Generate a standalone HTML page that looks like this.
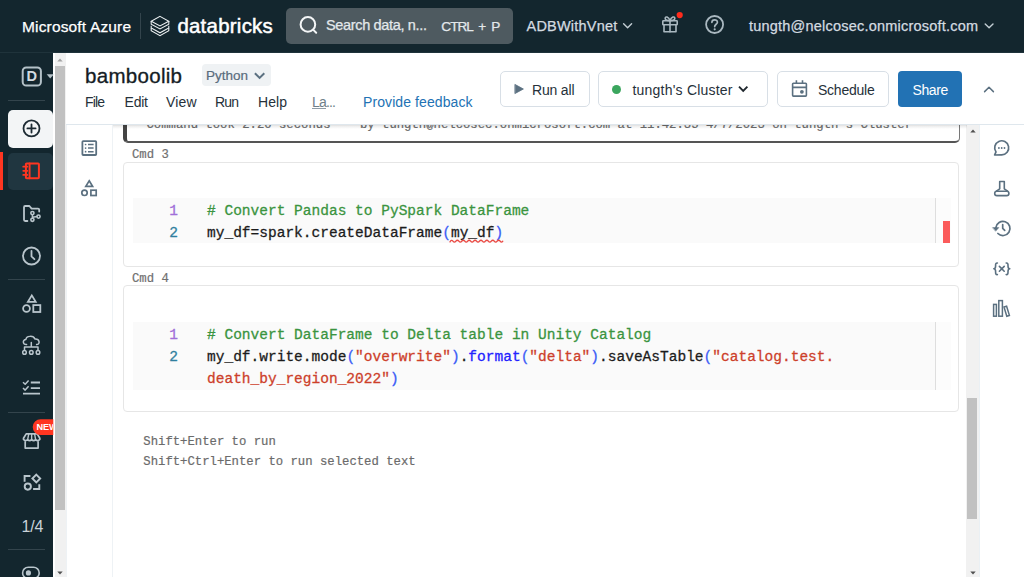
<!DOCTYPE html>
<html><head><meta charset="utf-8"><title>bamboolib - Databricks</title>
<style>
*{box-sizing:border-box;margin:0;padding:0}
html,body{width:1024px;height:577px;overflow:hidden;background:#fff;font-family:"Liberation Sans",sans-serif;}
#root{position:relative;width:1024px;height:577px;overflow:hidden;background:#fff}
.abs{position:absolute}
.t{position:absolute;white-space:pre;line-height:1;font-family:"Liberation Sans",sans-serif}
.m{position:absolute;white-space:pre;line-height:1;font-family:"Liberation Mono",monospace}
.cd{-webkit-text-stroke:0.28px currentColor}
svg{position:absolute;overflow:visible}
/* header */
#hdr{left:0;top:0;width:1024px;height:52.8px;background:#13262e;border-bottom:1px solid #1f333b}
#side{left:0;top:52px;width:53.3px;height:525px;background:#13262e}
#search{left:286px;top:8.2px;width:226.5px;height:35.5px;border-radius:5px;background:#4e5a60}
.sdiv{position:absolute;left:8px;width:37px;height:1px;background:#33444c}
/* scrollbars */
.track{position:absolute;background:#f1f1f1}
.thumb{position:absolute;background:#c1c1c1}
/* toolbar */
#tb{left:66px;top:52px;width:958px;height:72.8px;background:#fff;border-bottom:1px solid #dfe7ed}
.btn{position:absolute;border:1px solid #d8dfe6;border-radius:5px;background:#fff}
/* cells */
.cell{position:absolute;left:123px;width:836px;border:1px solid #e6e6e6;border-radius:4px;background:#fff}
.ed{position:absolute;left:133px;width:817.6px;background:#fafafa}
.ruler{position:absolute;left:934.6px;width:16px;background:#fcfcfc;border-left:1px solid #dedede}
.c{color:#3a9440}.s{color:#cd3f2a}.b{color:#3b5cf6}.f{color:#2222ff}.k{color:#1c1c1c}
</style></head><body><div id="root">

<!-- ============ MAIN CONTENT (below toolbar) ============ -->
<div class="abs" style="left:112px;top:122px;width:1px;height:455px;background:#eef2f5"></div>
<!-- previous cell (cut off) -->
<div class="abs" style="left:123px;top:90px;width:836.5px;height:52.6px;border:1px solid #777;border-left:4px solid #444;border-bottom:2px solid #555;border-radius:5px;background:#fff"></div>
<span class="m" style="left:146.5px;top:119.1px;font-size:12.28px;color:#6b6b6b;-webkit-text-stroke:0.2px #6b6b6b">Command took 2.20 seconds    by tungth@nelcosec.onmicrosoft.com at 11:42:35 4/7/2023 on tungth's Cluster</span>

<span class="m" style="left:132px;top:149.1px;font-size:12.28px;color:#707070;-webkit-text-stroke:0.2px #707070">Cmd 3</span>
<div class="cell" style="top:161.5px;height:105px"></div>
<div class="ed" style="top:198.4px;height:44.9px"></div>
<div class="ruler" style="top:198.4px;height:44.9px"></div>
<div class="abs" style="left:942.8px;top:221px;width:7.4px;height:22px;background:#fb5b5b"></div>
<span class="m cd" style="left:169.3px;top:203.9px;font-size:14.52px;color:#a06fd8">1</span>
<span class="m cd" style="left:169.3px;top:226.3px;font-size:14.52px;color:#2f7f9e">2</span>
<span class="m c cd" style="left:207px;top:203.9px;font-size:14.52px"># Convert Pandas to PySpark DataFrame</span>
<span class="m k cd" style="left:207px;top:226.3px;font-size:14.52px">my_df=spark.createDataFrame<span class="b">(</span>my_df<span class="b">)</span></span>
<svg style="left:0;top:0" width="1024" height="577" viewBox="0 0 1024 577"><path d="M450.00 241.80 Q451.48 239.30 452.95 241.20 Q454.42 243.10 455.90 241.20 Q457.38 239.30 458.85 241.20 Q460.32 243.10 461.80 241.20 Q463.27 239.30 464.75 241.20 Q466.22 243.10 467.70 241.20 Q469.17 239.30 470.65 241.20 Q472.12 243.10 473.60 241.20 Q475.07 239.30 476.55 241.20 Q478.02 243.10 479.50 241.20 Q480.97 239.30 482.45 241.20 Q483.92 243.10 485.40 241.20 Q486.87 239.30 488.35 241.20 Q489.82 243.10 491.30 241.20 Q492.77 239.30 494.25 241.20 Q495.72 243.10 497.20 241.20 Q498.67 239.30 500.15 241.20 Q501.47 243.10 502.80 241.20" fill="none" stroke="#ea4a44" stroke-width="1.35" stroke-linecap="round"/></svg>

<span class="m" style="left:132px;top:272.6px;font-size:12.28px;color:#707070;-webkit-text-stroke:0.2px #707070">Cmd 4</span>
<div class="cell" style="top:285px;height:126.8px"></div>
<div class="ed" style="top:322.3px;height:67.4px"></div>
<div class="ruler" style="top:322.3px;height:67.4px"></div>
<span class="m cd" style="left:169.3px;top:327.5px;font-size:14.52px;color:#a06fd8">1</span>
<span class="m cd" style="left:169.3px;top:349.8px;font-size:14.52px;color:#2f7f9e">2</span>
<span class="m c cd" style="left:207px;top:327.5px;font-size:14.52px"># Convert DataFrame to Delta table in Unity Catalog</span>
<span class="m k cd" style="left:207px;top:349.8px;font-size:14.52px">my_df.write.mode<span class="b">(</span><span class="s">"overwrite"</span><span class="b">)</span>.<span class="f">format</span><span class="b">(</span><span class="s">"delta"</span><span class="b">)</span>.saveAsTable<span class="b">(</span><span class="s">"catalog.test.</span></span>
<span class="m s cd" style="left:207px;top:372px;font-size:14.52px">death_by_region_2022"<span class="b">)</span></span>

<span class="m" style="left:143.3px;top:436.1px;font-size:12.28px;color:#6b6b6b;-webkit-text-stroke:0.2px #6b6b6b">Shift+Enter to run</span>
<span class="m" style="left:143.3px;top:456px;font-size:12.28px;color:#6b6b6b;-webkit-text-stroke:0.2px #6b6b6b">Shift+Ctrl+Enter to run selected text</span>

<!-- right scrollbar + right panel -->
<div class="track" style="left:966px;top:122px;width:12.8px;height:455px"></div>
<div class="thumb" style="left:967.3px;top:398px;width:9.6px;height:121px"></div>
<svg style="left:969.6px;top:129.4px" width="6" height="4" viewBox="0 0 6 4"><path d="M0.3 3.6 L3 0.5 L5.7 3.6 Z" fill="#505050"/></svg>
<svg style="left:969.6px;top:571.2px" width="6" height="4" viewBox="0 0 6 4"><path d="M0.3 0.4 L3 3.5 L5.7 0.4 Z" fill="#505050"/></svg>
<div class="abs" style="left:978.8px;top:122px;width:45.2px;height:455px;background:#fff;border-left:1px solid #eaf0f4"></div>
<svg style="left:0;top:0" width="1024" height="577" viewBox="0 0 1024 577" fill="none" stroke-linecap="round" stroke-linejoin="round" >
<!-- comment -->
<g stroke="#5b7080" stroke-width="1.7"><path d="M994.6 155 L996 151.9 A7 7 0 1 1 1001.7 154.8 Z"/></g>
<g fill="#5b7080"><circle cx="998.9" cy="148" r="0.9"/><circle cx="1001.7" cy="148" r="0.9"/><circle cx="1004.5" cy="148" r="0.9"/></g>
<!-- flask -->
<g stroke="#5b7080" stroke-width="1.6"><path d="M999.7 181.5 H1004.3 M999.7 181.5 V188.8 L996.4 191.2 M1004.3 181.5 V188.8 L1007.6 191.2"/><rect x="994.7" y="191.2" width="14.2" height="4.4" rx="2.2"/></g>
<!-- history -->
<g stroke="#5b7080" stroke-width="1.7"><path d="M995.85 227.7 A7.1 7.1 0 1 1 997.9 233.5"/><path d="M1002.7 224.5 V228.4 L1004.7 230.3"/></g>
<path d="M992.8 227.6 L998.9 227.6 L995.8 231 Z" fill="#5b7080" stroke="#5b7080" stroke-width="0.5"/>
<!-- {x} -->
<g stroke="#5b7080" stroke-width="1.6">
<path d="M997.4 263 C995.4 263 995.6 264.4 995.6 266 C995.6 267.6 995.4 268.8 993.8 268.8 C995.4 268.8 995.6 270 995.6 271.6 C995.6 273.2 995.4 274.6 997.4 274.6"/>
<path d="M1006.2 263 C1008.2 263 1008 264.4 1008 266 C1008 267.6 1008.2 268.8 1009.8 268.8 C1008.2 268.8 1008 270 1008 271.6 C1008 273.2 1008.2 274.6 1006.2 274.6"/>
<path d="M999.4 266.4 L1004.2 271.2 M1004.2 266.4 L999.4 271.2"/>
</g>
<!-- library -->
<g stroke="#5b7080" stroke-width="1.5" stroke-linejoin="miter">
<rect x="993.6" y="304.4" width="2.8" height="11.8"/>
<rect x="998.8" y="300.6" width="3.6" height="15.6"/>
<path d="M1004 307 L1006.6 306.2 L1009.4 315.4 L1006.8 316.2 Z"/>
</g>
</svg>

<div class="abs" style="left:113px;top:124px;width:853.5px;height:5px;background:linear-gradient(rgba(0,0,0,.16),rgba(0,0,0,.05) 55%,rgba(0,0,0,0))"></div>
<div class="abs" style="left:66px;top:124px;width:1px;height:453px;background:#eef2f5"></div>
<!-- ============ TOOLBAR ============ -->
<div id="tb" class="abs"></div>
<div class="abs" style="left:201.5px;top:64px;width:69px;height:22px;border-radius:4px;background:#eff2f4"></div>
<div class="btn" style="left:499.5px;top:70.5px;width:90px;height:36px"></div>
<div class="btn" style="left:598px;top:70.5px;width:169.5px;height:36px"></div>
<div class="btn" style="left:776.5px;top:70.5px;width:112.5px;height:36px"></div>
<div class="abs" style="left:898px;top:70.5px;width:64px;height:36px;border-radius:4px;background:#2272b4"></div>
<div class="abs" style="left:612px;top:84.5px;width:9px;height:9px;border-radius:50%;background:#3ba65e"></div>
<div class="abs" style="left:312px;top:108.3px;width:13.5px;height:1px;background:#8f9ca6"></div>
<svg style="left:0;top:0" width="1024" height="577" viewBox="0 0 1024 577" fill="none" stroke-linecap="round" stroke-linejoin="round" >
<path d="M515.2 84.6 L523.4 89 L515.2 93.4 Z" fill="#5b7080" stroke="#5b7080" stroke-width="0.8"/>
<path d="M254.9 73.2 L259.6 77.9 L264.3 73.2" stroke="#5b7080" stroke-width="2" stroke-linecap="butt" stroke-linejoin="miter"/>
<path d="M739 86.6 L743.2 90.8 L747.4 86.6" stroke="#1f272d" stroke-width="1.9" stroke-linecap="butt" stroke-linejoin="miter"/>
<path d="M984.6 91.6 L989 87.2 L993.4 91.6" stroke="#5b7080" stroke-width="1.5"/>
<!-- calendar -->
<g stroke="#5b7080" stroke-width="1.6" stroke-linecap="butt"><rect x="792.6" y="83.3" width="13.8" height="12.8" rx="0.8"/><path d="M792.6 87.4 H806.4 M796.4 80.3 V83.3 M802.5 80.3 V83.3"/></g>
<circle cx="801.9" cy="91.8" r="1.9" fill="#5b7080"/>
</svg>

<!-- left notebook panel icons -->
<svg style="left:0;top:0" width="1024" height="577" viewBox="0 0 1024 577" fill="none" stroke-linecap="round" stroke-linejoin="round" >
<g stroke="#5b7080" stroke-width="1.8">
<rect x="82.4" y="141.2" width="13.8" height="13.8" rx="0.8"/>
<path d="M88 144.5 H93.6 M88 148.1 H93.6 M88 151.7 H93.6" stroke-width="1.5" stroke-linecap="butt"/>
</g>
<g fill="#5b7080"><circle cx="85.6" cy="144.5" r="0.85"/><circle cx="85.6" cy="148.1" r="0.85"/><circle cx="85.6" cy="151.7" r="0.85"/></g>
<g stroke="#5b7080" stroke-width="1.7" stroke-linejoin="miter"><path d="M89.2 180.8 L92.6 186.4 H85.8 Z"/><circle cx="84.5" cy="192.8" r="2.7"/><rect x="90.9" y="190.2" width="5.3" height="5.3"/></g>
</svg>

<!-- ============ SIDEBAR ============ -->
<div id="side" class="abs"></div>
<div class="track" style="left:55.2px;top:52px;width:10.8px;height:525px"></div>
<div class="thumb" style="left:55.2px;top:65.6px;width:9.4px;height:444px"></div>
<svg style="left:56.8px;top:57.6px" width="6" height="4" viewBox="0 0 6 4"><path d="M0.3 3.6 L3 0.6 L5.7 3.6 Z" fill="#a3a3a3"/></svg>
<svg style="left:56.8px;top:571px" width="6" height="4" viewBox="0 0 6 4"><path d="M0.3 0.4 L3 3.4 L5.7 0.4 Z" fill="#505050"/></svg>
<div class="sdiv" style="top:99.5px"></div>
<div class="sdiv" style="top:278.6px"></div>
<div class="sdiv" style="top:411.6px"></div>
<div class="sdiv" style="top:548.6px"></div>
<div class="abs" style="left:8px;top:109.5px;width:45px;height:38px;border-radius:5px;background:#f3f5f6"></div>
<div class="abs" style="left:8px;top:152.5px;width:45px;height:37px;border-radius:5px;background:#203640"></div>
<div class="abs" style="left:0;top:152px;width:3px;height:38px;background:#ff3621"></div>
<svg style="left:0;top:0" width="1024" height="577" viewBox="0 0 1024 577" fill="none" stroke-linecap="round" stroke-linejoin="round" >
<!-- D workspace box -->
<rect x="22.7" y="67.4" width="18.2" height="18.2" rx="3.6" stroke="#b4c1c8" stroke-width="2"/>
<path d="M46.7 74.3 H53.3 V75 L50.2 78.6 Z" fill="#b4c1c8" stroke="none"/>
<!-- plus circle -->
<g stroke="#1d2b33" stroke-width="1.8"><circle cx="31.5" cy="128.4" r="8"/><path d="M27.4 128.4 H35.6 M31.5 124.3 V132.5"/></g>
<!-- notebook (active, red) -->
<g stroke="#ff3621" stroke-width="2"><rect x="25.9" y="163.4" width="13" height="14.8" rx="0.8"/><path d="M29.6 163.4 V178.2" stroke-width="1.9"/><path d="M23.2 166.7 H27.4 M23.2 170.8 H27.4 M23.2 174.9 H27.4" stroke-width="1.7"/></g>
<!-- repos: folder + branch -->
<g stroke="#b9c5cc" stroke-width="1.8">
<path d="M27.4 221 H25.2 Q24 221 24 219.8 V207.2 Q24 206 25.2 206 H29.4 L31.6 208.6 H38 Q39.2 208.6 39.2 209.8 V211.6"/>
<circle cx="32.4" cy="213.1" r="1.6" stroke-width="1.6"/><circle cx="32.4" cy="219.8" r="1.6" stroke-width="1.6"/><circle cx="38.5" cy="216.6" r="1.6" stroke-width="1.6"/>
<path d="M32.4 214.8 V218.1 M32.6 217.6 C33.4 216.6 34.8 216.7 36.8 216.6" stroke-width="1.5"/>
</g>
<!-- clock -->
<g stroke="#b9c5cc" stroke-width="1.8"><circle cx="31.5" cy="256" r="8.5"/><path d="M31.5 250.8 V256.4 L34.4 259.2"/></g>
<!-- shapes -->
<g stroke="#b9c5cc" stroke-width="1.8" stroke-linejoin="miter"><path d="M31.8 295.4 L35.7 301.8 H27.9 Z"/><circle cx="26.5" cy="308.5" r="3.4"/><rect x="33.3" y="305.1" width="7" height="6.9"/></g>
<!-- cloud hierarchy -->
<g stroke="#b9c5cc" stroke-width="1.5">
<path d="M26.6 344.6 C22.6 344.8 22.2 339.8 25.9 339.5 C26.2 335.7 33.4 335.1 34.9 339.1 C39.8 338.7 40.5 344.4 36.6 344.6"/>
<path d="M31.3 342.4 V347 M24.5 350.2 V347 H38 V350.2"/>
<circle cx="24.5" cy="352.4" r="1.8"/><circle cx="31.3" cy="352.4" r="1.8"/><circle cx="38" cy="352.4" r="1.8"/>
</g>
<!-- checklist -->
<g stroke="#b9c5cc" stroke-width="1.8" stroke-linecap="butt"><path d="M23 382.2 L25.2 384.3 L28.6 380.5 M23 388 L25.2 390.1 L28.6 386.3" stroke-width="1.5"/><path d="M30.8 382.5 H40 M30.8 388.2 H40 M23 393.7 H40"/></g>
<!-- store -->
<g stroke="#b9c5cc" stroke-width="1.7">
<path d="M25.2 441.8 V448.1 H38.1 V441.8"/>
<path d="M26.2 433.9 H37.2 L39.8 438.2 V439.4 Q37.7 441.7 35.65 439.7 Q33.6 441.7 31.6 439.7 Q29.6 441.7 27.6 439.7 Q25.5 441.7 23.5 439.4 V438.2 Z"/>
<path d="M28.7 434.2 L27.7 439.4 M31.65 434.2 V439.4 M34.6 434.2 L35.6 439.4" stroke-width="1.4"/>
</g>
<!-- NEW badge -->
<path d="M53.3 419.2 H40.6 A7.9 7.9 0 0 0 40.6 435 H53.3 Z" fill="#ff3621" stroke="none"/>
<!-- diamond / circle / brackets -->
<g stroke="#b9c5cc" stroke-width="1.9" stroke-linejoin="miter" stroke-linecap="butt">
<path d="M36.3 474.6 L40.2 478.5 L36.3 482.4 L32.4 478.5 Z"/>
<circle cx="27.8" cy="486.6" r="3.1"/>
<path d="M24.6 481.8 V476 H30.4 M39.3 484.2 V489 H33.1"/>
</g>
<!-- toggle -->
<g stroke="#b9c5cc" stroke-width="1.6"><rect x="22.6" y="567.2" width="16.6" height="11.4" rx="5.7"/></g>
<circle cx="28.4" cy="572.9" r="2.6" fill="#b9c5cc"/>
</svg>

<!-- ============ HEADER ============ -->
<div id="hdr" class="abs"></div>
<div class="abs" style="left:140px;top:13px;width:1px;height:26px;background:#33444c"></div>
<div id="search" class="abs"></div>
<svg style="left:0;top:0" width="1024" height="577" viewBox="0 0 1024 577" fill="none" stroke-linecap="round" stroke-linejoin="round" >
<!-- databricks logo -->
<g stroke="#eef2f4" stroke-width="1.05" stroke-linejoin="miter" stroke-linecap="butt">
<path d="M160 16.4 L168.8 21.2 L160 26 L151.2 21.2 Z"/>
<path d="M151.2 21.2 V24.2 L160 29 L168.8 24.2 V21.2"/>
<path d="M151.2 25.8 V28 L160 32.8 L168.8 28 V25.8"/>
<path d="M151.2 28 V30.8 L160 35.6 L168.8 30.8 V28"/>
</g>
<!-- search -->
<g stroke="#f4f6f7" stroke-width="2"><circle cx="307.9" cy="24.4" r="7.3"/><path d="M313.3 29.9 L316.2 32.8"/></g>
<!-- chevrons -->
<path d="M623.6 23.8 L627.6 27.8 L631.6 23.8" stroke="#c3ced4" stroke-width="1.4"/>
<path d="M985.2 23.9 L989.1 27.8 L993 23.9" stroke="#c3ced4" stroke-width="1.4"/>
<!-- gift -->
<g stroke="#aab8c0" stroke-width="1.6">
<rect x="662.8" y="20.8" width="14.4" height="4" rx="0.6"/>
<path d="M664 24.8 V31.8 H676 V24.8"/>
<path d="M670 20.6 V31.8"/>
<path d="M670 20.6 C668.6 16.6 665.2 16 665.2 18.4 C665.2 20.2 667.5 20.6 670 20.6 C672.5 20.6 674.8 20.2 674.8 18.4 C674.8 16 671.4 16.6 670 20.6"/>
</g>
<circle cx="679.7" cy="15.1" r="3.1" fill="#ff2b1c"/>
<!-- help -->
<g stroke="#aab8c0" stroke-width="1.8"><circle cx="714.6" cy="24.5" r="8.5"/>
<path d="M711.9 22.3 C711.9 19 717.4 19 717.4 22.2 C717.4 24.2 714.7 24.3 714.7 26.6" stroke-width="1.7"/></g>
<circle cx="714.7" cy="29.3" r="1.1" fill="#aab8c0"/>
</svg>

<span class="t" style="left:22px;top:18.88px;font-size:15.5px;font-weight:400;color:#ffffff;letter-spacing:0.156px;-webkit-text-stroke:0.25px currentColor;">Microsoft Azure</span>
<span class="t" style="left:177.4px;top:15.73px;font-size:20.4px;font-weight:400;color:#ffffff;letter-spacing:0.274px;-webkit-text-stroke:0.5px #fff;">databricks</span>
<span class="t" style="left:326px;top:18.43px;font-size:14.5px;font-weight:400;color:#e3e8eb;letter-spacing:-0.338px;-webkit-text-stroke:0.25px currentColor;">Search data, n...</span>
<span class="t" style="left:441.3px;top:20.29px;font-size:13.6px;font-weight:400;color:#e3e8eb;letter-spacing:-0.967px;-webkit-text-stroke:0.25px currentColor;">CTRL</span>
<span class="t" style="left:478.2px;top:20.29px;font-size:13.6px;font-weight:400;color:#e3e8eb;letter-spacing:0.647px;-webkit-text-stroke:0.25px currentColor;">+</span>
<span class="t" style="left:491.2px;top:20.29px;font-size:13.6px;font-weight:400;color:#e3e8eb;letter-spacing:0.122px;-webkit-text-stroke:0.25px currentColor;">P</span>
<span class="t" style="left:526.5px;top:19.23px;font-size:14.5px;font-weight:400;color:#d3dbe0;letter-spacing:0.214px;-webkit-text-stroke:0.25px currentColor;">ADBWithVnet</span>
<span class="t" style="left:749px;top:19.23px;font-size:14.5px;font-weight:400;color:#d3dbe0;letter-spacing:0.211px;-webkit-text-stroke:0.25px currentColor;">tungth@nelcosec.onmicrosoft.com</span>
<span class="t" style="left:85px;top:65.65px;font-size:20.5px;font-weight:400;color:#141c24;letter-spacing:0.301px;-webkit-text-stroke:0.32px #141c24;">bamboolib</span>
<span class="t" style="left:206px;top:68.87px;font-size:13.5px;font-weight:400;color:#586c7c;letter-spacing:-0.006px;-webkit-text-stroke:0.2px currentColor;">Python</span>
<span class="t" style="left:85px;top:95.15px;font-size:14px;font-weight:400;color:#26313a;letter-spacing:-0.854px;">File</span>
<span class="t" style="left:124.5px;top:95.15px;font-size:14px;font-weight:400;color:#26313a;letter-spacing:-0.208px;">Edit</span>
<span class="t" style="left:166px;top:95.15px;font-size:14px;font-weight:400;color:#26313a;letter-spacing:0.135px;">View</span>
<span class="t" style="left:215px;top:95.15px;font-size:14px;font-weight:400;color:#26313a;letter-spacing:-0.844px;">Run</span>
<span class="t" style="left:258px;top:95.15px;font-size:14px;font-weight:400;color:#26313a;letter-spacing:0.068px;">Help</span>
<span class="t" style="left:312px;top:95.15px;font-size:14px;font-weight:400;color:#6f7f8a;letter-spacing:-0.812px;">La...</span>
<span class="t" style="left:363px;top:95.15px;font-size:14px;font-weight:400;color:#2272b4;letter-spacing:0.087px;">Provide feedback</span>
<span class="t" style="left:532px;top:82.65px;font-size:14px;font-weight:400;color:#26313a;letter-spacing:-0.182px;">Run all</span>
<span class="t" style="left:632.5px;top:82.65px;font-size:14px;font-weight:400;color:#26313a;letter-spacing:0.210px;">tungth's Cluster</span>
<span class="t" style="left:818px;top:82.65px;font-size:14px;font-weight:400;color:#26313a;letter-spacing:-0.242px;">Schedule</span>
<span class="t" style="left:912.6px;top:82.65px;font-size:14px;font-weight:400;color:#ffffff;letter-spacing:-0.440px;">Share</span>
<span class="t" style="left:21.5px;top:518.96px;font-size:16px;font-weight:400;color:#c9d3d9;letter-spacing:-0.125px;">1/4</span>
<span class="t" style="left:26.5px;top:69.15px;font-size:14.6px;font-weight:700;color:#d3dbe0">D</span>
<div class="abs" style="left:0;top:415px;width:53.3px;height:24px;overflow:hidden"><span class="t" style="left:36.4px;top:8.4px;font-size:9.2px;font-weight:700;color:#fff;letter-spacing:-0.1px">NEW</span></div>

</div></body></html>
